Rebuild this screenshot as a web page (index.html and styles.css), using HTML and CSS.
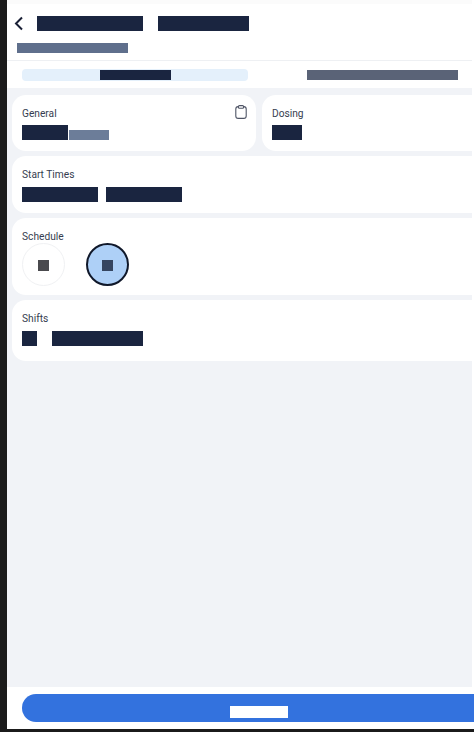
FILE: index.html
```html
<!DOCTYPE html>
<html lang="en">
<head>
    <meta charset="UTF-8">
    <meta name="viewport" content="width=device-width, initial-scale=1.0">
    <title>Schedule</title>
    <link rel="stylesheet" href="styles.css">
</head>
<body>
    <div class="screen">
        <div class="header">
            <div class="title-row">
                <svg class="back" width="10" height="15" viewBox="0 0 10 15" fill="none" stroke="#1a2036" stroke-width="2">
                    <path d="M8 1.5 L2 7.5 L8 13.5"/>
                </svg>
                <span class="block title-a"></span>
                <span class="block title-b"></span>
            </div>
            <span class="block subtitle"></span>
        </div>
        <div class="tabs">
            <div class="tab-active"><span class="block tab-text"></span></div>
            <span class="block tab-other"></span>
        </div>
        <div class="content">
            <div class="card-row">
                <div class="card general">
                    <div class="label-row">
                        <div class="label">General</div>
                        <svg class="clip" width="12" height="14" viewBox="0 0 12 14" fill="none" stroke="#4f5566" stroke-width="1.1">
                            <rect x="0.8" y="1.6" width="10.4" height="11.8" rx="2.4"/>
                            <rect x="3.4" y="0.6" width="5.2" height="2.6" rx="1" fill="#fff"/>
                        </svg>
                    </div>
                    <div class="values tight">
                        <span class="block v46"></span>
                        <span class="block small"></span>
                    </div>
                </div>
                <div class="card dosing">
                    <div class="label-row"><div class="label">Dosing</div></div>
                    <div class="values"><span class="block v30"></span></div>
                </div>
            </div>
            <div class="card start">
                <div class="label">Start Times</div>
                <div class="values gap8">
                    <span class="block v76"></span>
                    <span class="block v76"></span>
                </div>
            </div>
            <div class="card schedule">
                <div class="label">Schedule</div>
                <div class="circles">
                    <div class="circle"><span class="dot"></span></div>
                    <div class="circle selected"><span class="dot"></span></div>
                </div>
            </div>
            <div class="card shifts">
                <div class="label">Shifts</div>
                <div class="values gap15">
                    <span class="block v15"></span>
                    <span class="block v91"></span>
                </div>
            </div>
        </div>
        <div class="footer">
            <button class="save"><span class="save-text"></span></button>
        </div>
    </div>
</body>
</html>
```

FILE: styles.css
```css
html, body {
    height: 100%;
}
body {
    margin: 0;
    background-color: #1b1b1b;
    font-family: Roboto, "Liberation Sans", sans-serif;
    overflow: hidden;
}
.screen {
    display: flex;
    flex-direction: column;
    height: 729px;
    width: 467px;
    margin-left: 7px;
    background-color: #fff;
    overflow: hidden;
}
.block {
    display: block;
    flex: none;
    height: 15px;
    background-color: #1a2540;
}
.header {
    height: 61px;
    width: 465px;
    flex: none;
    box-sizing: border-box;
    padding: 12px 0 0 10px;
    background-color: #fff;
    border-top: 4px solid #fbfbfb;
    border-bottom: 1px solid #eef0f3;
}
.title-row {
    display: flex;
    align-items: center;
}
.back {
    margin-right: 13px;
    margin-left: -3px;
}
.title-a {
    width: 106px;
    margin-right: 15px;
}
.title-b {
    width: 91px;
}
.subtitle {
    width: 111px;
    height: 10px;
    margin-top: 12px;
    background-color: #5f6f8c;
}
.tabs {
    display: flex;
    align-items: center;
    height: 27px;
    flex: none;
    padding-left: 15px;
    background-color: #fff;
}
.tab-active {
    display: flex;
    justify-content: center;
    align-items: center;
    width: 226px;
    height: 12px;
    border-radius: 4px;
    background-color: #e4f0fb;
}
.tab-text {
    width: 71px;
    height: 10px;
    margin-left: 1px;
}
.tab-other {
    width: 151px;
    height: 10px;
    margin-left: 59px;
    background-color: #5a6377;
}
.content {
    flex: 1;
    width: 465px;
    box-sizing: border-box;
    padding: 7px 0 0 5px;
    display: flex;
    flex-direction: column;
    gap: 5px;
    background-color: #f1f3f7;
}
.card-row {
    display: flex;
    gap: 6px;
}
.card {
    box-sizing: border-box;
    background-color: #fff;
    border-radius: 14px 0 0 14px;
    padding: 12px 10px 0;
    width: 462px;
    flex: none;
}
.general {
    width: 244px;
    height: 56px;
    border-radius: 14px;
    padding-right: 9px;
}
.dosing {
    width: 240px;
    height: 56px;
}
.start {
    height: 57px;
}
.schedule {
    height: 77px;
}
.shifts {
    height: 61px;
}
.label-row {
    display: flex;
    justify-content: space-between;
    height: 18px;
}
.clip {
    margin-top: -2px;
}
.label {
    font-size: 10.2px;
    line-height: 14px;
    color: #363d50;
}
.start .label, .shifts .label {
    margin-bottom: 5px;
}
.values {
    display: flex;
    align-items: flex-end;
}
.tight {
    gap: 1px;
}
.gap8 {
    gap: 8px;
}
.gap15 {
    gap: 15px;
}
.v15 { width: 15px; }
.v30 { width: 30px; }
.v46 { width: 46px; }
.v76 { width: 76px; }
.v91 { width: 91px; }
.small {
    width: 40px;
    height: 10px;
    background-color: #6c7d99;
}
.circles {
    display: flex;
    gap: 21px;
    margin-top: -1px;
}
.circle {
    display: flex;
    align-items: center;
    justify-content: center;
    box-sizing: border-box;
    width: 43px;
    height: 43px;
    border-radius: 50%;
    border: 1px solid #f0f1f3;
}
.circle.selected {
    background-color: #aed0f7;
    border: 2px solid #10182a;
}
.dot {
    width: 11px;
    height: 11px;
    margin-top: 2px;
    background-color: #4a4a4e;
}
.selected .dot {
    background-color: #354560;
}
.footer {
    flex: none;
    height: 42px;
    box-sizing: border-box;
    padding: 7px 0 0 15px;
    background-color: #fff;
}
.save {
    display: block;
    width: 530px;
    height: 28px;
    padding: 8px 0 0 208px;
    border: none;
    border-radius: 14px;
    background-color: #3372de;
    text-align: left;
}
.save-text {
    display: block;
    width: 58px;
    height: 12px;
    background-color: #fff;
}
```
